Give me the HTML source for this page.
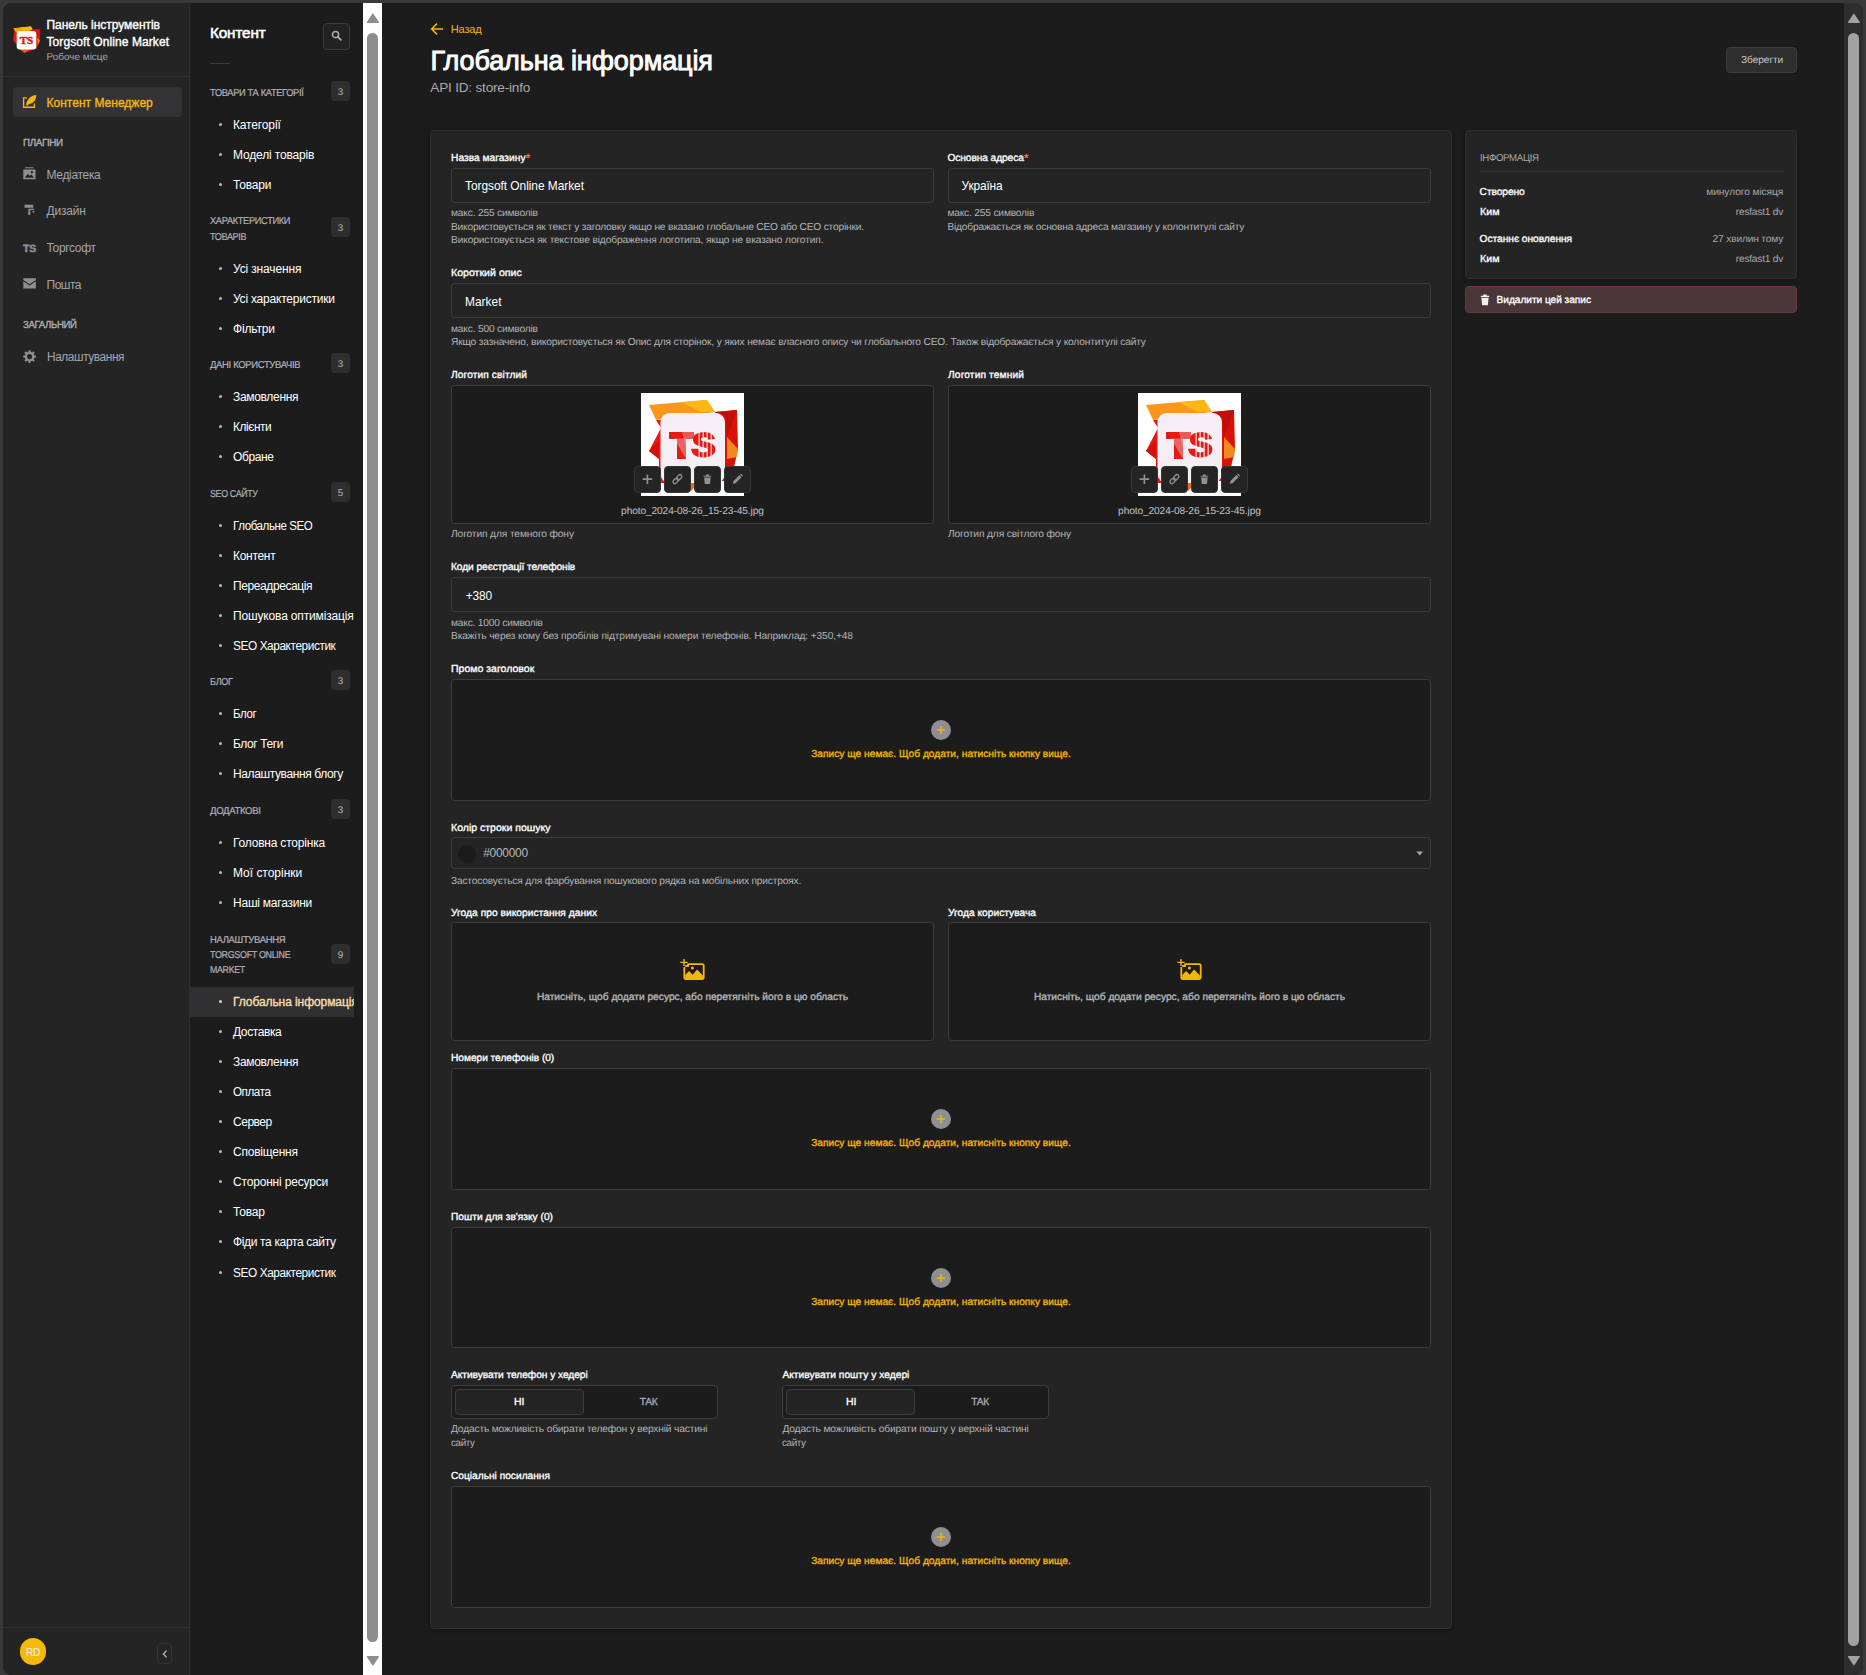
<!DOCTYPE html>
<html lang="uk"><head><meta charset="utf-8"><title>Глобальна інформація</title>
<style>
html,body{margin:0;padding:0;background:#38393b;}
body{width:1866px;height:1675px;overflow:hidden;position:relative;background:#38393b;font-family:"Liberation Sans", sans-serif;}
div,span,svg{position:absolute;display:block;}
span{white-space:nowrap;line-height:1;}
</style></head><body>
<div style="left:3px;top:3px;width:1860px;height:1672px;background:#1c1c1c;border-radius:9px 9px 9px 9px;overflow:hidden;"><div style="left:0;top:0;width:186px;height:1672px;background:#242424;border-right:1px solid #2f2f2f;"></div><div style="left:360px;top:0;width:19.2px;height:1672px;background:#fdfdfd;"></div><div style="left:1841px;top:0;width:19px;height:1672px;background:#2d2d2d;"></div></div>
<svg style="left:12px;top:24.6px;" width="30" height="30" viewBox="0 0 30 30"><polygon points="1.3,3.2 18.8,1.6 20.6,4.2 27.8,4.5 28,15.6 24.6,23.4 12.4,28 1,15.6 2.5,6" fill="#e51b0b"/><polygon points="1.3,3.2 18.8,1.6 20.6,4.2 14,7.5 4,7.5" fill="#f9a60c"/><polygon points="8,2.6 18.8,1.6 20.6,4.2 12,5" fill="#fcc10f"/><polygon points="20.6,4.4 27.8,4.5 28,15.6 24.6,21" fill="#d8140a"/><polygon points="24.6,12 28,15.6 26,20" fill="#f07a14"/><polygon points="6,23 12.4,28 18,24" fill="#f2551a"/><rect x="4.7" y="6" width="19.6" height="18.6" rx="3" fill="#fff"/><text x="14.5" y="19.2" font-family="Liberation Serif, serif" font-weight="700" font-size="11" text-anchor="middle" fill="#e3160f" stroke="#e3160f" stroke-width="0.5">TS</text></svg>
<span style="left:46.50px;top:19px;font-size:12px;color:#ffffff;letter-spacing:-0.032px;-webkit-text-stroke:0.38px #ffffff;">Панель інструментів</span>
<span style="left:46.50px;top:36px;font-size:12px;color:#ffffff;letter-spacing:0.085px;-webkit-text-stroke:0.38px #ffffff;">Torgsoft Online Market</span>
<span style="left:46.50px;top:53px;font-size:10px;color:#a5a5ad;letter-spacing:-0.017px;text-rendering:geometricPrecision;">Робоче місце</span>
<div style="left:3px;top:75.5px;width:186px;height:1px;background:#303030;"></div>
<div style="left:13px;top:87px;width:169px;height:30px;background:#333336;border-radius:4px;"></div>
<svg style="left:22px;top:94px;" width="15" height="15" viewBox="0 0 15 15"><path d="M4.9 3.9H1.6v9.3h10.8V9.4" stroke="#f5b50a" stroke-width="1.35" fill="none"/><path d="M4.2 11.6 C4.3 6.4 8.2 1.5 14.2 1.1 C14.3 6.2 11.2 9.8 6.9 10 L5.4 11.7Z" fill="#f5b50a"/></svg>
<span style="left:46.50px;top:97px;font-size:12px;color:#f5b50a;letter-spacing:0.019px;-webkit-text-stroke:0.38px #f5b50a;">Контент Менеджер</span>
<span style="left:23.20px;top:139px;font-size:10.2px;color:#b0b0b6;letter-spacing:-0.357px;transform-origin:0 0;transform:scaleX(0.9592);-webkit-text-stroke:0.33px #b0b0b6;text-rendering:geometricPrecision;">ПЛАГІНИ</span>
<svg style="left:23.3px;top:167.2px;" width="12.8" height="12.8" viewBox="0 0 14 14"><rect x="2.4" y="0.3" width="9.2" height="1.1" fill="#8e8e93"/><path d="M0.3 2.6h13.4v10.9H0.3z M9.7 4.4a1.3 1.3 0 1 0 0.01 0z M1.9 11.7h10.2l-3.1-3.4-1.6 1.6-2-2.4z" fill="#8e8e93" fill-rule="evenodd"/></svg>
<span style="left:46.50px;top:169px;font-size:12px;color:#a5a5ad;letter-spacing:-0.318px;">Медіатека</span>
<svg style="left:24.2px;top:204.4px;" width="11.6" height="11.6" viewBox="0 0 13 13"><rect x="0.6" y="0.8" width="9.8" height="3.4" fill="#8e8e93"/><path d="M0.6 5.2h10.9v1.4H6.8v1.9H4.9V5.2z" fill="#8e8e93"/><rect x="4.6" y="8.4" width="2.6" height="3.6" rx="0.6" fill="#8e8e93"/><circle cx="10.6" cy="8.7" r="1.1" fill="#8e8e93"/></svg>
<span style="left:46.50px;top:205px;font-size:12px;color:#a5a5ad;letter-spacing:-0.169px;">Дизайн</span>
<span style="left:23.00px;top:244px;font-size:10.5px;color:#8e8e93;letter-spacing:-0.222px;font-weight:700;-webkit-text-stroke:0.5px #8e8e93;text-rendering:geometricPrecision;">TS</span>
<span style="left:46.50px;top:242px;font-size:12px;color:#a5a5ad;letter-spacing:-0.326px;">Торгсофт</span>
<svg style="left:23px;top:278.3px;" width="13.2" height="10.8" viewBox="0 0 14 12"><path d="M0 0.2h14v1.9L7 6.9 0 2.1z M0 3.6l7 4.8 7-4.8V11.8H0z" fill="#8e8e93"/></svg>
<span style="left:46.50px;top:279px;font-size:12px;color:#a5a5ad;letter-spacing:-0.492px;">Пошта</span>
<span style="left:23.20px;top:321px;font-size:10.2px;color:#b0b0b6;letter-spacing:-0.357px;transform-origin:0 0;transform:scaleX(0.9419);-webkit-text-stroke:0.33px #b0b0b6;text-rendering:geometricPrecision;">ЗАГАЛЬНИЙ</span>
<svg style="left:23px;top:349.9px;" width="13.2" height="13.2" viewBox="0 0 14 14"><path d="M12.06,5.79 L13.82,5.92 L13.82,8.08 L12.06,8.21 L11.43,9.72 L12.58,11.06 L11.06,12.58 L9.72,11.43 L8.21,12.06 L8.08,13.82 L5.92,13.82 L5.79,12.06 L4.28,11.43 L2.94,12.58 L1.42,11.06 L2.57,9.72 L1.94,8.21 L0.18,8.08 L0.18,5.92 L1.94,5.79 L2.57,4.28 L1.42,2.94 L2.94,1.42 L4.28,2.57 L5.79,1.94 L5.92,0.18 L8.08,0.18 L8.21,1.94 L9.72,2.57 L11.06,1.42 L12.58,2.94 L11.43,4.28Z M9.7,7 a2.7,2.7 0 1,0 -5.4,0 a2.7,2.7 0 1,0 5.4,0Z" fill="#8e8e93" fill-rule="evenodd"/></svg>
<span style="left:46.50px;top:351px;font-size:12px;color:#a5a5ad;letter-spacing:-0.420px;transform-origin:0 0;transform:scaleX(0.9894);">Налаштування</span>
<div style="left:3px;top:1627px;width:186px;height:1px;background:#303030;"></div>
<div style="left:19.8px;top:1638px;width:26.2px;height:26.8px;border-radius:13.4px;background:#f5b90c;"></div>
<span style="left:25.85px;top:1647px;font-size:11px;color:#eef0ee;letter-spacing:-0.385px;transform-origin:0 0;transform:scaleX(0.9222);">RD</span>
<div style="left:157.4px;top:1643.4px;width:14.4px;height:20.4px;border:1px solid #323232;box-sizing:border-box;border-radius:4px;"></div>
<svg style="left:159.6px;top:1647.7px;" width="10" height="12" viewBox="0 0 10 12"><path d="M6.6 2.6L3.4 6l3.2 3.4" stroke="#b8b8bc" stroke-width="1.3" fill="none"/></svg>
<span style="left:210.00px;top:25px;font-size:15.3px;color:#ffffff;letter-spacing:-0.154px;-webkit-text-stroke:0.55px #fff;">Контент</span>
<div style="left:323px;top:23px;width:27px;height:27px;background:#222222;border:1px solid #3b3b3b;box-sizing:border-box;border-radius:4px;"></div>
<svg style="left:330.6px;top:30.4px;" width="11.4" height="11.4" viewBox="0 0 13 13"><circle cx="5.2" cy="5.2" r="3.5" stroke="#a9a9ad" stroke-width="1.8" fill="none"/><path d="M8 8l3.2 3.2" stroke="#a9a9ad" stroke-width="2.1" stroke-linecap="round"/></svg>
<div style="left:210px;top:63px;width:20px;height:1px;background:#3a3a3a;"></div>
<span style="left:210.00px;top:89px;font-size:10.0px;color:#b2b2ba;letter-spacing:-0.350px;transform-origin:0 0;transform:scaleX(0.9250);-webkit-text-stroke:0.2px #b2b2ba;text-rendering:geometricPrecision;">ТОВАРИ ТА КАТЕГОРІЇ</span>
<div style="left:331px;top:81.2px;width:19px;height:19.7px;background:#2e2e2e;border-radius:4px;"></div>
<span style="left:337.87px;top:88px;font-size:9.8px;color:#b8b8bc;letter-spacing:-0.294px;text-rendering:geometricPrecision;">3</span>
<div style="left:218.9px;top:123px;width:3px;height:3px;border-radius:1.5px;background:#b9b9b9;"></div>
<span style="left:233.00px;top:119px;font-size:12px;color:#ffffff;letter-spacing:-0.145px;">Категорії</span>
<div style="left:218.9px;top:153px;width:3px;height:3px;border-radius:1.5px;background:#b9b9b9;"></div>
<span style="left:233.00px;top:149px;font-size:12px;color:#ffffff;letter-spacing:-0.153px;">Моделі товарів</span>
<div style="left:218.9px;top:183px;width:3px;height:3px;border-radius:1.5px;background:#b9b9b9;"></div>
<span style="left:233.00px;top:179px;font-size:12px;color:#ffffff;letter-spacing:-0.172px;">Товари</span>
<span style="left:210.00px;top:217px;font-size:10.0px;color:#b2b2ba;letter-spacing:-0.350px;transform-origin:0 0;transform:scaleX(0.9240);-webkit-text-stroke:0.2px #b2b2ba;text-rendering:geometricPrecision;">ХАРАКТЕРИСТИКИ</span>
<span style="left:210.00px;top:233px;font-size:10.0px;color:#b2b2ba;letter-spacing:-0.350px;transform-origin:0 0;transform:scaleX(0.9017);-webkit-text-stroke:0.2px #b2b2ba;text-rendering:geometricPrecision;">ТОВАРІВ</span>
<div style="left:331px;top:217.2px;width:19px;height:19.7px;background:#2e2e2e;border-radius:4px;"></div>
<span style="left:337.87px;top:224px;font-size:9.8px;color:#b8b8bc;letter-spacing:-0.294px;text-rendering:geometricPrecision;">3</span>
<div style="left:218.9px;top:267px;width:3px;height:3px;border-radius:1.5px;background:#b9b9b9;"></div>
<span style="left:233.00px;top:263px;font-size:12px;color:#ffffff;letter-spacing:-0.141px;">Усі значення</span>
<div style="left:218.9px;top:297px;width:3px;height:3px;border-radius:1.5px;background:#b9b9b9;"></div>
<span style="left:233.00px;top:293px;font-size:12px;color:#ffffff;letter-spacing:-0.215px;">Усі характеристики</span>
<div style="left:218.9px;top:327px;width:3px;height:3px;border-radius:1.5px;background:#b9b9b9;"></div>
<span style="left:233.00px;top:323px;font-size:12px;color:#ffffff;letter-spacing:-0.164px;">Фільтри</span>
<span style="left:210.00px;top:361px;font-size:10.0px;color:#b2b2ba;letter-spacing:-0.350px;transform-origin:0 0;transform:scaleX(0.9460);-webkit-text-stroke:0.2px #b2b2ba;text-rendering:geometricPrecision;">ДАНІ КОРИСТУВАЧІВ</span>
<div style="left:331px;top:353.2px;width:19px;height:19.7px;background:#2e2e2e;border-radius:4px;"></div>
<span style="left:337.87px;top:360px;font-size:9.8px;color:#b8b8bc;letter-spacing:-0.294px;text-rendering:geometricPrecision;">3</span>
<div style="left:218.9px;top:395px;width:3px;height:3px;border-radius:1.5px;background:#b9b9b9;"></div>
<span style="left:233.00px;top:391px;font-size:12px;color:#ffffff;letter-spacing:-0.319px;">Замовлення</span>
<div style="left:218.9px;top:425px;width:3px;height:3px;border-radius:1.5px;background:#b9b9b9;"></div>
<span style="left:233.00px;top:421px;font-size:12px;color:#ffffff;letter-spacing:-0.420px;transform-origin:0 0;transform:scaleX(0.9900);">Клієнти</span>
<div style="left:218.9px;top:455px;width:3px;height:3px;border-radius:1.5px;background:#b9b9b9;"></div>
<span style="left:233.00px;top:451px;font-size:12px;color:#ffffff;letter-spacing:-0.392px;">Обране</span>
<span style="left:210.00px;top:490px;font-size:10.0px;color:#b2b2ba;letter-spacing:-0.350px;transform-origin:0 0;transform:scaleX(0.8802);-webkit-text-stroke:0.2px #b2b2ba;text-rendering:geometricPrecision;">SEO САЙТУ</span>
<div style="left:331px;top:482.2px;width:19px;height:19.7px;background:#2e2e2e;border-radius:4px;"></div>
<span style="left:337.87px;top:489px;font-size:9.8px;color:#b8b8bc;letter-spacing:-0.294px;text-rendering:geometricPrecision;">5</span>
<div style="left:218.9px;top:524px;width:3px;height:3px;border-radius:1.5px;background:#b9b9b9;"></div>
<span style="left:233.00px;top:520px;font-size:12px;color:#ffffff;letter-spacing:-0.420px;transform-origin:0 0;transform:scaleX(0.9603);">Глобальне SEO</span>
<div style="left:218.9px;top:554px;width:3px;height:3px;border-radius:1.5px;background:#b9b9b9;"></div>
<span style="left:233.00px;top:550px;font-size:12px;color:#ffffff;letter-spacing:-0.292px;">Контент</span>
<div style="left:218.9px;top:584px;width:3px;height:3px;border-radius:1.5px;background:#b9b9b9;"></div>
<span style="left:233.00px;top:580px;font-size:12px;color:#ffffff;letter-spacing:-0.399px;">Переадресація</span>
<div style="left:218.9px;top:614px;width:3px;height:3px;border-radius:1.5px;background:#b9b9b9;"></div>
<span style="left:233.00px;top:610px;font-size:12px;color:#ffffff;letter-spacing:-0.154px;">Пошукова оптимізація</span>
<div style="left:218.9px;top:644px;width:3px;height:3px;border-radius:1.5px;background:#b9b9b9;"></div>
<span style="left:233.00px;top:640px;font-size:12px;color:#ffffff;letter-spacing:-0.420px;transform-origin:0 0;transform:scaleX(0.9863);">SEO Характеристик</span>
<span style="left:210.00px;top:678px;font-size:10.0px;color:#b2b2ba;letter-spacing:-0.350px;transform-origin:0 0;transform:scaleX(0.9059);-webkit-text-stroke:0.2px #b2b2ba;text-rendering:geometricPrecision;">БЛОГ</span>
<div style="left:331px;top:670.2px;width:19px;height:19.7px;background:#2e2e2e;border-radius:4px;"></div>
<span style="left:337.87px;top:677px;font-size:9.8px;color:#b8b8bc;letter-spacing:-0.294px;text-rendering:geometricPrecision;">3</span>
<div style="left:218.9px;top:712px;width:3px;height:3px;border-radius:1.5px;background:#b9b9b9;"></div>
<span style="left:233.00px;top:708px;font-size:12px;color:#ffffff;letter-spacing:-0.420px;transform-origin:0 0;transform:scaleX(0.9604);">Блог</span>
<div style="left:218.9px;top:742px;width:3px;height:3px;border-radius:1.5px;background:#b9b9b9;"></div>
<span style="left:233.00px;top:738px;font-size:12px;color:#ffffff;letter-spacing:-0.409px;">Блог Теги</span>
<div style="left:218.9px;top:772px;width:3px;height:3px;border-radius:1.5px;background:#b9b9b9;"></div>
<span style="left:233.00px;top:768px;font-size:12px;color:#ffffff;letter-spacing:-0.382px;">Налаштування блогу</span>
<span style="left:210.00px;top:807px;font-size:10.0px;color:#b2b2ba;letter-spacing:-0.350px;transform-origin:0 0;transform:scaleX(0.9559);-webkit-text-stroke:0.2px #b2b2ba;text-rendering:geometricPrecision;">ДОДАТКОВІ</span>
<div style="left:331px;top:799.2px;width:19px;height:19.7px;background:#2e2e2e;border-radius:4px;"></div>
<span style="left:337.87px;top:806px;font-size:9.8px;color:#b8b8bc;letter-spacing:-0.294px;text-rendering:geometricPrecision;">3</span>
<div style="left:218.9px;top:841px;width:3px;height:3px;border-radius:1.5px;background:#b9b9b9;"></div>
<span style="left:233.00px;top:837px;font-size:12px;color:#ffffff;letter-spacing:-0.195px;">Головна сторінка</span>
<div style="left:218.9px;top:871px;width:3px;height:3px;border-radius:1.5px;background:#b9b9b9;"></div>
<span style="left:233.00px;top:867px;font-size:12px;color:#ffffff;letter-spacing:-0.022px;">Мої сторінки</span>
<div style="left:218.9px;top:901px;width:3px;height:3px;border-radius:1.5px;background:#b9b9b9;"></div>
<span style="left:233.00px;top:897px;font-size:12px;color:#ffffff;letter-spacing:-0.232px;">Наші магазини</span>
<span style="left:210.00px;top:936px;font-size:10.0px;color:#b2b2ba;letter-spacing:-0.350px;transform-origin:0 0;transform:scaleX(0.9460);-webkit-text-stroke:0.2px #b2b2ba;text-rendering:geometricPrecision;">НАЛАШТУВАННЯ</span>
<span style="left:210.00px;top:951px;font-size:10.0px;color:#b2b2ba;letter-spacing:-0.350px;transform-origin:0 0;transform:scaleX(0.8925);-webkit-text-stroke:0.2px #b2b2ba;text-rendering:geometricPrecision;">TORGSOFT ONLINE</span>
<span style="left:210.00px;top:966px;font-size:10.0px;color:#b2b2ba;letter-spacing:-0.350px;transform-origin:0 0;transform:scaleX(0.8817);-webkit-text-stroke:0.2px #b2b2ba;text-rendering:geometricPrecision;">MARKET</span>
<div style="left:331px;top:944.2px;width:19px;height:19.7px;background:#2e2e2e;border-radius:4px;"></div>
<span style="left:337.87px;top:951px;font-size:9.8px;color:#b8b8bc;letter-spacing:-0.294px;text-rendering:geometricPrecision;">9</span>
<div style="left:190px;top:987px;width:164px;height:30px;background:#303033;"></div>
<div style="left:218.9px;top:1000px;width:3px;height:3px;border-radius:1.5px;background:#e8d4b0;"></div>
<div style="left:233px;top:992px;width:121px;height:20px;overflow:hidden;">
<span style="left:0.00px;top:4px;font-size:12px;color:#f6dcae;letter-spacing:-0.078px;-webkit-text-stroke:0.38px #f6dcae;">Глобальна інформація</span>
</div>
<div style="left:218.9px;top:1030px;width:3px;height:3px;border-radius:1.5px;background:#b9b9b9;"></div>
<span style="left:233.00px;top:1026px;font-size:12px;color:#ffffff;letter-spacing:-0.392px;">Доставка</span>
<div style="left:218.9px;top:1060px;width:3px;height:3px;border-radius:1.5px;background:#b9b9b9;"></div>
<span style="left:233.00px;top:1056px;font-size:12px;color:#ffffff;letter-spacing:-0.319px;">Замовлення</span>
<div style="left:218.9px;top:1090px;width:3px;height:3px;border-radius:1.5px;background:#b9b9b9;"></div>
<span style="left:233.00px;top:1086px;font-size:12px;color:#ffffff;letter-spacing:-0.420px;transform-origin:0 0;transform:scaleX(0.9673);">Оплата</span>
<div style="left:218.9px;top:1120px;width:3px;height:3px;border-radius:1.5px;background:#b9b9b9;"></div>
<span style="left:233.00px;top:1116px;font-size:12px;color:#ffffff;letter-spacing:-0.482px;">Сервер</span>
<div style="left:218.9px;top:1150px;width:3px;height:3px;border-radius:1.5px;background:#b9b9b9;"></div>
<span style="left:233.00px;top:1146px;font-size:12px;color:#ffffff;letter-spacing:-0.227px;">Сповіщення</span>
<div style="left:218.9px;top:1180px;width:3px;height:3px;border-radius:1.5px;background:#b9b9b9;"></div>
<span style="left:233.00px;top:1176px;font-size:12px;color:#ffffff;letter-spacing:-0.180px;">Сторонні ресурси</span>
<div style="left:218.9px;top:1210px;width:3px;height:3px;border-radius:1.5px;background:#b9b9b9;"></div>
<span style="left:233.00px;top:1206px;font-size:12px;color:#ffffff;letter-spacing:-0.164px;">Товар</span>
<div style="left:218.9px;top:1240px;width:3px;height:3px;border-radius:1.5px;background:#b9b9b9;"></div>
<span style="left:233.00px;top:1236px;font-size:12px;color:#ffffff;letter-spacing:-0.348px;">Фіди та карта сайту</span>
<div style="left:218.9px;top:1271px;width:3px;height:3px;border-radius:1.5px;background:#b9b9b9;"></div>
<span style="left:233.00px;top:1267px;font-size:12px;color:#ffffff;letter-spacing:-0.420px;transform-origin:0 0;transform:scaleX(0.9872);">SEO Характеристик</span>
<svg style="left:365.6px;top:12px;" width="14" height="12" viewBox="0 0 14 12"><path d="M6.9 0.9 L12.9 9.9 Q13.2 10.9 12.3 10.9 L1.5 10.9 Q0.6 10.9 0.9 9.9 Z" fill="#8c8c8c"/></svg>
<div style="left:367px;top:32.5px;width:11px;height:1609.5px;background:#8c8c8c;border-radius:5.5px;"></div>
<svg style="left:365.6px;top:1655px;" width="14" height="12" viewBox="0 0 14 12"><path d="M6.9 11.1 L12.9 2.1 Q13.2 1.1 12.3 1.1 L1.5 1.1 Q0.6 1.1 0.9 2.1 Z" fill="#8c8c8c"/></svg>
<svg style="left:430px;top:22px;" width="14" height="14" viewBox="0 0 14 14"><path d="M13 7H2.2 M7 1.6L1.6 7 7 12.4" stroke="#f5b50a" stroke-width="1.5" fill="none" stroke-linejoin="miter"/></svg>
<span style="left:450.75px;top:24px;font-size:11px;color:#f5b50a;letter-spacing:-0.133px;">Назад</span>
<span style="left:430.50px;top:48px;font-size:27px;color:#ffffff;letter-spacing:-0.085px;-webkit-text-stroke:0.9px #fff;">Глобальна інформація</span>
<span style="left:430.30px;top:81px;font-size:13.6px;color:#a9a9ad;letter-spacing:-0.206px;">API ID: store-info</span>
<div style="left:1726px;top:47px;width:71px;height:26px;background:#2e2e2e;border:1px solid #3c3c3c;box-sizing:border-box;border-radius:4px;"></div>
<span style="left:1741.00px;top:56px;font-size:10.2px;color:#c8c8cc;letter-spacing:-0.093px;text-rendering:geometricPrecision;">Зберегти</span>
<div style="left:430px;top:130px;width:1022px;height:1499px;background:#242424;border:1px solid #2f2f2f;box-sizing:border-box;border-radius:3.5px;box-shadow:0 1px 5px rgba(0,0,0,0.4);"></div>
<span style="left:451.00px;top:154px;font-size:10.2px;color:#ffffff;letter-spacing:0.025px;-webkit-text-stroke:0.33px #ffffff;text-rendering:geometricPrecision;">Назва магазину</span>
<span style="left:525.70px;top:153px;font-size:11.5px;color:#ef6a5e;letter-spacing:0.000px;-webkit-text-stroke:0.37px #ef6a5e;">*</span>
<div style="left:451px;top:168px;width:483px;height:35px;background:#242424;border:1px solid #3d3d3d;box-sizing:border-box;border-radius:3.5px;"></div>
<span style="left:465.00px;top:181px;font-size:11.9px;color:#ffffff;letter-spacing:-0.030px;">Torgsoft Online Market</span>
<span style="left:451.00px;top:209px;font-size:10.2px;color:#b4b4b8;letter-spacing:-0.176px;text-rendering:geometricPrecision;">макс. 255 символів</span>
<span style="left:451.00px;top:223px;font-size:10.2px;color:#b4b4b8;letter-spacing:-0.200px;text-rendering:geometricPrecision;">Використовується як текст у заголовку якщо не вказано глобальне СЕО або СЕО сторінки.</span>
<span style="left:451.00px;top:236px;font-size:10.2px;color:#b4b4b8;letter-spacing:-0.123px;text-rendering:geometricPrecision;">Використовується як текстове відображення логотипа, якщо не вказано логотип.</span>
<span style="left:947.40px;top:154px;font-size:10.2px;color:#ffffff;letter-spacing:-0.081px;-webkit-text-stroke:0.33px #ffffff;text-rendering:geometricPrecision;">Основна адреса</span>
<span style="left:1024.10px;top:153px;font-size:11.5px;color:#ef6a5e;letter-spacing:0.000px;-webkit-text-stroke:0.37px #ef6a5e;">*</span>
<div style="left:948px;top:168px;width:483px;height:35px;background:#242424;border:1px solid #3d3d3d;box-sizing:border-box;border-radius:3.5px;"></div>
<span style="left:961.60px;top:181px;font-size:11.9px;color:#ffffff;letter-spacing:-0.156px;">Україна</span>
<span style="left:947.40px;top:209px;font-size:10.2px;color:#b4b4b8;letter-spacing:-0.176px;text-rendering:geometricPrecision;">макс. 255 символів</span>
<span style="left:947.40px;top:223px;font-size:10.2px;color:#b4b4b8;letter-spacing:-0.186px;text-rendering:geometricPrecision;">Відображається як основна адреса магазину у колонтитулі сайту</span>
<span style="left:451.00px;top:269px;font-size:10.2px;color:#ffffff;letter-spacing:0.000px;transform-origin:0 0;transform:scaleX(1.0402);-webkit-text-stroke:0.33px #ffffff;text-rendering:geometricPrecision;">Короткий опис</span>
<div style="left:451px;top:283px;width:980px;height:35px;background:#242424;border:1px solid #3d3d3d;box-sizing:border-box;border-radius:3.5px;"></div>
<span style="left:465.00px;top:297px;font-size:11.9px;color:#ffffff;letter-spacing:0.031px;">Market</span>
<span style="left:451.00px;top:325px;font-size:10.2px;color:#b4b4b8;letter-spacing:-0.176px;text-rendering:geometricPrecision;">макс. 500 символів</span>
<span style="left:451.00px;top:338px;font-size:10.2px;color:#b4b4b8;letter-spacing:-0.153px;text-rendering:geometricPrecision;">Якщо зазначено, використовується як Опис для сторінок, у яких немає власного опису чи глобального СЕО. Також відображається у колонтитулі сайту</span>
<span style="left:451.00px;top:371px;font-size:10.2px;color:#ffffff;letter-spacing:0.105px;-webkit-text-stroke:0.33px #ffffff;text-rendering:geometricPrecision;">Логотип світлий</span>
<div style="left:451px;top:385px;width:483px;height:138.5px;background:#1c1c1c;border:1px solid #3d3d3d;box-sizing:border-box;border-radius:3.5px;"></div>
<svg style="left:641.0px;top:393px;" width="103" height="103" viewBox="0 0 103 103"><rect width="103" height="103" fill="#fff"/><polygon points="8,12 66,7 74,19 15,27" fill="#f7981d"/><polygon points="40,9 66,7 74,19 60,19" fill="#fcb813"/><polygon points="15,27 20,35 8,58 18,66 18,90 30,90 30,27" fill="#ea180c"/><polygon points="8,58 18,66 18,48" fill="#d2120a"/><polygon points="74,19 96,17 97,56 90,88 78,88 78,27" fill="#d91208"/><polygon points="86,44 97,56 96,64 86,66" fill="#f08a1c"/><polygon points="74,19 96,17 86,44 84,28" fill="#c20e08"/><polygon points="46,88 60,88 50,98" fill="#f26a1b"/><rect x="19.5" y="20" width="64.5" height="70" rx="9" fill="#f4eff5"/><g transform="translate(0 39) scale(1 0.82) translate(0 -39)"><path d="M28 39h25v8.6h-8v24.4h-9V47.6h-8z" fill="#e41b13"/><path d="M41 39h12v8.6h-8v10z" fill="#f4eff5" opacity="0.3"/><path d="M74 47.5c-1-5-5-8.5-11-8.5-6.5 0-11 3.6-11 9 0 5 3 7.4 9.5 9.3 4 1.2 5 1.9 5 3.6 0 1.8-1.6 2.9-4 2.9-3 0-4.8-1.4-5.2-4.4h-7.2c0.5 7 5 10.6 12.4 10.6 7.2 0 11.9-3.7 11.9-9.6 0-4.9-2.8-7.5-9.6-9.4-4-1.1-4.9-1.7-4.9-3.2 0-1.5 1.3-2.5 3.4-2.5 2.4 0 3.7 1.1 4 3.3z" fill="#e41b13"/><path d="M33 47l12 0 0 25z" fill="#f4eff5" opacity="0.35"/><rect x="57.5" y="38" width="1.3" height="36" fill="#f4eff5" opacity="0.85"/><rect x="61.5" y="38" width="1.3" height="36" fill="#f4eff5" opacity="0.85"/><rect x="65.5" y="38" width="1.3" height="36" fill="#f4eff5" opacity="0.85"/><rect x="69.5" y="38" width="1.3" height="36" fill="#f4eff5" opacity="0.85"/></g></svg>
<div style="left:634.0px;top:466px;width:27px;height:27px;background:#242424;border:1px solid #363636;box-sizing:border-box;border-radius:4px;"></div>
<svg style="left:634.0px;top:466px;" width="27" height="27" viewBox="0 0 27 27"><g transform="translate(13.4 13.2) scale(0.9) translate(-13.5 -13.5)"><path d="M13.5 8.2v10.6M8.2 13.5h10.6" stroke="#8f8f94" stroke-width="1.9"/></g></svg>
<div style="left:664.0px;top:466px;width:27px;height:27px;background:#242424;border:1px solid #363636;box-sizing:border-box;border-radius:4px;"></div>
<svg style="left:664.0px;top:466px;" width="27" height="27" viewBox="0 0 27 27"><g transform="translate(13.4 13.2) scale(0.9) translate(-13.5 -13.5)"><g transform="rotate(-45 13.5 13.5)" stroke="#8f8f94" stroke-width="1.5" fill="none"><rect x="7.3" y="11.4" width="6.8" height="4.2" rx="2.1"/><rect x="12.9" y="11.4" width="6.8" height="4.2" rx="2.1"/></g></g></svg>
<div style="left:694.0px;top:466px;width:27px;height:27px;background:#242424;border:1px solid #363636;box-sizing:border-box;border-radius:4px;"></div>
<svg style="left:694.0px;top:466px;" width="27" height="27" viewBox="0 0 27 27"><g transform="translate(13.4 13.2) scale(0.9) translate(-13.5 -13.5)"><path d="M9.3 9.6h8.4v1.3H9.3z M11.8 8.4h3.4v1.2h-3.4z M9.9 11.6h7.2l-0.7 7.3h-5.8z" fill="#8f8f94"/></g></svg>
<div style="left:724.0px;top:466px;width:27px;height:27px;background:#242424;border:1px solid #363636;box-sizing:border-box;border-radius:4px;"></div>
<svg style="left:724.0px;top:466px;" width="27" height="27" viewBox="0 0 27 27"><g transform="translate(13.4 13.2) scale(0.9) translate(-13.5 -13.5)"><path d="M8.4 18.6l0.7-3.1 6.6-6.6 2.4 2.4-6.6 6.6z M16.4 8.2l1-1 2.4 2.4-1 1z" fill="#8f8f94"/></g></svg>
<span style="left:621.12px;top:507px;font-size:10.2px;color:#c2c2c6;letter-spacing:-0.122px;text-rendering:geometricPrecision;">photo_2024-08-26_15-23-45.jpg</span>
<span style="left:451.00px;top:530px;font-size:10.2px;color:#b4b4b8;letter-spacing:-0.109px;text-rendering:geometricPrecision;">Логотип для темного фону</span>
<span style="left:948.00px;top:371px;font-size:10.2px;color:#ffffff;letter-spacing:0.137px;-webkit-text-stroke:0.33px #ffffff;text-rendering:geometricPrecision;">Логотип темний</span>
<div style="left:948px;top:385px;width:483px;height:138.5px;background:#1c1c1c;border:1px solid #3d3d3d;box-sizing:border-box;border-radius:3.5px;"></div>
<svg style="left:1138.0px;top:393px;" width="103" height="103" viewBox="0 0 103 103"><rect width="103" height="103" fill="#fff"/><polygon points="8,12 66,7 74,19 15,27" fill="#f7981d"/><polygon points="40,9 66,7 74,19 60,19" fill="#fcb813"/><polygon points="15,27 20,35 8,58 18,66 18,90 30,90 30,27" fill="#ea180c"/><polygon points="8,58 18,66 18,48" fill="#d2120a"/><polygon points="74,19 96,17 97,56 90,88 78,88 78,27" fill="#d91208"/><polygon points="86,44 97,56 96,64 86,66" fill="#f08a1c"/><polygon points="74,19 96,17 86,44 84,28" fill="#c20e08"/><polygon points="46,88 60,88 50,98" fill="#f26a1b"/><rect x="19.5" y="20" width="64.5" height="70" rx="9" fill="#f4eff5"/><g transform="translate(0 39) scale(1 0.82) translate(0 -39)"><path d="M28 39h25v8.6h-8v24.4h-9V47.6h-8z" fill="#e41b13"/><path d="M41 39h12v8.6h-8v10z" fill="#f4eff5" opacity="0.3"/><path d="M74 47.5c-1-5-5-8.5-11-8.5-6.5 0-11 3.6-11 9 0 5 3 7.4 9.5 9.3 4 1.2 5 1.9 5 3.6 0 1.8-1.6 2.9-4 2.9-3 0-4.8-1.4-5.2-4.4h-7.2c0.5 7 5 10.6 12.4 10.6 7.2 0 11.9-3.7 11.9-9.6 0-4.9-2.8-7.5-9.6-9.4-4-1.1-4.9-1.7-4.9-3.2 0-1.5 1.3-2.5 3.4-2.5 2.4 0 3.7 1.1 4 3.3z" fill="#e41b13"/><path d="M33 47l12 0 0 25z" fill="#f4eff5" opacity="0.35"/><rect x="57.5" y="38" width="1.3" height="36" fill="#f4eff5" opacity="0.85"/><rect x="61.5" y="38" width="1.3" height="36" fill="#f4eff5" opacity="0.85"/><rect x="65.5" y="38" width="1.3" height="36" fill="#f4eff5" opacity="0.85"/><rect x="69.5" y="38" width="1.3" height="36" fill="#f4eff5" opacity="0.85"/></g></svg>
<div style="left:1131.0px;top:466px;width:27px;height:27px;background:#242424;border:1px solid #363636;box-sizing:border-box;border-radius:4px;"></div>
<svg style="left:1131.0px;top:466px;" width="27" height="27" viewBox="0 0 27 27"><g transform="translate(13.4 13.2) scale(0.9) translate(-13.5 -13.5)"><path d="M13.5 8.2v10.6M8.2 13.5h10.6" stroke="#8f8f94" stroke-width="1.9"/></g></svg>
<div style="left:1161.0px;top:466px;width:27px;height:27px;background:#242424;border:1px solid #363636;box-sizing:border-box;border-radius:4px;"></div>
<svg style="left:1161.0px;top:466px;" width="27" height="27" viewBox="0 0 27 27"><g transform="translate(13.4 13.2) scale(0.9) translate(-13.5 -13.5)"><g transform="rotate(-45 13.5 13.5)" stroke="#8f8f94" stroke-width="1.5" fill="none"><rect x="7.3" y="11.4" width="6.8" height="4.2" rx="2.1"/><rect x="12.9" y="11.4" width="6.8" height="4.2" rx="2.1"/></g></g></svg>
<div style="left:1191.0px;top:466px;width:27px;height:27px;background:#242424;border:1px solid #363636;box-sizing:border-box;border-radius:4px;"></div>
<svg style="left:1191.0px;top:466px;" width="27" height="27" viewBox="0 0 27 27"><g transform="translate(13.4 13.2) scale(0.9) translate(-13.5 -13.5)"><path d="M9.3 9.6h8.4v1.3H9.3z M11.8 8.4h3.4v1.2h-3.4z M9.9 11.6h7.2l-0.7 7.3h-5.8z" fill="#8f8f94"/></g></svg>
<div style="left:1221.0px;top:466px;width:27px;height:27px;background:#242424;border:1px solid #363636;box-sizing:border-box;border-radius:4px;"></div>
<svg style="left:1221.0px;top:466px;" width="27" height="27" viewBox="0 0 27 27"><g transform="translate(13.4 13.2) scale(0.9) translate(-13.5 -13.5)"><path d="M8.4 18.6l0.7-3.1 6.6-6.6 2.4 2.4-6.6 6.6z M16.4 8.2l1-1 2.4 2.4-1 1z" fill="#8f8f94"/></g></svg>
<span style="left:1118.12px;top:507px;font-size:10.2px;color:#c2c2c6;letter-spacing:-0.122px;text-rendering:geometricPrecision;">photo_2024-08-26_15-23-45.jpg</span>
<span style="left:948.00px;top:530px;font-size:10.2px;color:#b4b4b8;letter-spacing:-0.122px;text-rendering:geometricPrecision;">Логотип для світлого фону</span>
<span style="left:451.00px;top:563px;font-size:10.2px;color:#ffffff;letter-spacing:-0.076px;-webkit-text-stroke:0.33px #ffffff;text-rendering:geometricPrecision;">Коди реєстрації телефонів</span>
<div style="left:451px;top:577px;width:980px;height:35px;background:#242424;border:1px solid #3d3d3d;box-sizing:border-box;border-radius:3.5px;"></div>
<span style="left:465.75px;top:591px;font-size:11.9px;color:#ffffff;letter-spacing:-0.099px;">+380</span>
<span style="left:451.00px;top:619px;font-size:10.2px;color:#b4b4b8;letter-spacing:-0.202px;text-rendering:geometricPrecision;">макс. 1000 символів</span>
<span style="left:451.00px;top:632px;font-size:10.2px;color:#b4b4b8;letter-spacing:-0.111px;text-rendering:geometricPrecision;">Вкажіть через кому без пробілів підтримувані номери телефонів. Наприклад: +350,+48</span>
<span style="left:451.00px;top:665px;font-size:10.2px;color:#ffffff;letter-spacing:0.000px;transform-origin:0 0;transform:scaleX(1.0332);-webkit-text-stroke:0.33px #ffffff;text-rendering:geometricPrecision;">Промо заголовок</span>
<div style="left:451px;top:679px;width:980px;height:122px;background:#1c1c1c;border:1px solid #3d3d3d;box-sizing:border-box;border-radius:3.5px;"></div>
<div style="left:931.0px;top:720px;width:20px;height:20px;border-radius:10px;background:#8e8e93;"></div>
<svg style="left:935.0px;top:724px;" width="12" height="12" viewBox="0 0 12 12"><path d="M6 1.9v8.2M1.9 6h8.2" stroke="#f5b50a" stroke-width="1.4"/></svg>
<span style="left:811.20px;top:750px;font-size:10.2px;color:#f5b50a;letter-spacing:0.009px;-webkit-text-stroke:0.33px #f5b50a;text-rendering:geometricPrecision;">Запису ще немає. Щоб додати, натисніть кнопку вище.</span>
<span style="left:451.00px;top:824px;font-size:10.2px;color:#ffffff;letter-spacing:0.000px;transform-origin:0 0;transform:scaleX(1.0336);-webkit-text-stroke:0.33px #ffffff;text-rendering:geometricPrecision;">Колір строки пошуку</span>
<div style="left:451px;top:837px;width:980px;height:32px;background:#242424;border:1px solid #3d3d3d;box-sizing:border-box;border-radius:3.5px;"></div>
<div style="left:457.5px;top:845px;width:18px;height:18px;border-radius:9px;background:#1b1b1b;"></div>
<span style="left:483.25px;top:848px;font-size:11.9px;color:#b9b9bd;letter-spacing:-0.258px;">#000000</span>
<svg style="left:1416.2px;top:850.8px;" width="7.4" height="4.8" viewBox="0 0 9 6"><path d="M0.3 0.6h8.4L4.5 5.6z" fill="#a4a4a8"/></svg>
<span style="left:451.00px;top:877px;font-size:10.2px;color:#b4b4b8;letter-spacing:-0.181px;text-rendering:geometricPrecision;">Застосовується для фарбування пошукового рядка на мобільних пристроях.</span>
<span style="left:451.00px;top:909px;font-size:10.2px;color:#ffffff;letter-spacing:0.048px;-webkit-text-stroke:0.33px #ffffff;text-rendering:geometricPrecision;">Угода про використання даних</span>
<div style="left:451px;top:922px;width:483px;height:119px;background:#1c1c1c;border:1px solid #3d3d3d;box-sizing:border-box;border-radius:3.5px;"></div>
<svg style="left:680.0px;top:959px;" width="26" height="23" viewBox="0 0 26 23"><path d="M3.3 -0.2v2.9H0.4v1.4h2.9v2.9h1.4V4.1h2.9V2.7H4.7V-0.2z" fill="#f5b50a"/><path d="M5.2 8V5.9h2V4.2h15.2c1.2 0 2.2 1 2.2 2.2v12.3c0 1.2-1 2.2-2.2 2.2H5.6c-1.2 0-2.2-1-2.2-2.2V8z M5.2 8v10.6c0 0.3 0.2 0.5 0.5 0.5H22.300000000000001c0.3 0 0.5-0.2 0.5-0.5V6.5c0-0.3-0.2-0.5-0.5-0.5H8.9V8z" fill="#f5b50a" fill-rule="evenodd"/><path d="M5.2 19.2V16l3.9-3.9 3.6 3.6 4.4-5.3 5.8 6.2v2.6z" fill="#f5b50a"/><circle cx="12.4" cy="9" r="1.5" fill="#f5b50a"/></svg>
<span style="left:536.88px;top:993px;font-size:10.2px;color:#b4b4b8;letter-spacing:0.011px;-webkit-text-stroke:0.35px #b4b4b8;text-rendering:geometricPrecision;">Натисніть, щоб додати ресурс, або перетягніть його в цю область</span>
<span style="left:948.00px;top:909px;font-size:10.2px;color:#ffffff;letter-spacing:0.021px;-webkit-text-stroke:0.33px #ffffff;text-rendering:geometricPrecision;">Угода користувача</span>
<div style="left:948px;top:922px;width:483px;height:119px;background:#1c1c1c;border:1px solid #3d3d3d;box-sizing:border-box;border-radius:3.5px;"></div>
<svg style="left:1177.0px;top:959px;" width="26" height="23" viewBox="0 0 26 23"><path d="M3.3 -0.2v2.9H0.4v1.4h2.9v2.9h1.4V4.1h2.9V2.7H4.7V-0.2z" fill="#f5b50a"/><path d="M5.2 8V5.9h2V4.2h15.2c1.2 0 2.2 1 2.2 2.2v12.3c0 1.2-1 2.2-2.2 2.2H5.6c-1.2 0-2.2-1-2.2-2.2V8z M5.2 8v10.6c0 0.3 0.2 0.5 0.5 0.5H22.300000000000001c0.3 0 0.5-0.2 0.5-0.5V6.5c0-0.3-0.2-0.5-0.5-0.5H8.9V8z" fill="#f5b50a" fill-rule="evenodd"/><path d="M5.2 19.2V16l3.9-3.9 3.6 3.6 4.4-5.3 5.8 6.2v2.6z" fill="#f5b50a"/><circle cx="12.4" cy="9" r="1.5" fill="#f5b50a"/></svg>
<span style="left:1033.88px;top:993px;font-size:10.2px;color:#b4b4b8;letter-spacing:0.011px;-webkit-text-stroke:0.35px #b4b4b8;text-rendering:geometricPrecision;">Натисніть, щоб додати ресурс, або перетягніть його в цю область</span>
<span style="left:451.00px;top:1054px;font-size:10.2px;color:#ffffff;letter-spacing:-0.039px;-webkit-text-stroke:0.33px #ffffff;text-rendering:geometricPrecision;">Номери телефонів (0)</span>
<div style="left:451px;top:1068px;width:980px;height:122px;background:#1c1c1c;border:1px solid #3d3d3d;box-sizing:border-box;border-radius:3.5px;"></div>
<div style="left:931.0px;top:1109px;width:20px;height:20px;border-radius:10px;background:#8e8e93;"></div>
<svg style="left:935.0px;top:1113px;" width="12" height="12" viewBox="0 0 12 12"><path d="M6 1.9v8.2M1.9 6h8.2" stroke="#f5b50a" stroke-width="1.4"/></svg>
<span style="left:811.20px;top:1139px;font-size:10.2px;color:#f5b50a;letter-spacing:0.009px;-webkit-text-stroke:0.33px #f5b50a;text-rendering:geometricPrecision;">Запису ще немає. Щоб додати, натисніть кнопку вище.</span>
<span style="left:451.00px;top:1213px;font-size:10.2px;color:#ffffff;letter-spacing:0.013px;-webkit-text-stroke:0.33px #ffffff;text-rendering:geometricPrecision;">Пошти для зв&#x27;язку (0)</span>
<div style="left:451px;top:1227px;width:980px;height:121px;background:#1c1c1c;border:1px solid #3d3d3d;box-sizing:border-box;border-radius:3.5px;"></div>
<div style="left:931.0px;top:1268px;width:20px;height:20px;border-radius:10px;background:#8e8e93;"></div>
<svg style="left:935.0px;top:1272px;" width="12" height="12" viewBox="0 0 12 12"><path d="M6 1.9v8.2M1.9 6h8.2" stroke="#f5b50a" stroke-width="1.4"/></svg>
<span style="left:811.20px;top:1298px;font-size:10.2px;color:#f5b50a;letter-spacing:0.009px;-webkit-text-stroke:0.33px #f5b50a;text-rendering:geometricPrecision;">Запису ще немає. Щоб додати, натисніть кнопку вище.</span>
<span style="left:451.00px;top:1371px;font-size:10.2px;color:#ffffff;letter-spacing:-0.041px;-webkit-text-stroke:0.33px #ffffff;text-rendering:geometricPrecision;">Активувати телефон у хедері</span>
<div style="left:451px;top:1385px;width:266.6px;height:34px;background:#1c1c1c;border:1px solid #3d3d3d;box-sizing:border-box;border-radius:4px;"></div>
<div style="left:455px;top:1389px;width:129px;height:26px;background:#242424;border:1px solid #3d3d3d;box-sizing:border-box;border-radius:4px;"></div>
<span style="left:514.25px;top:1398px;font-size:10.2px;color:#ffffff;letter-spacing:0.000px;transform-origin:0 0;transform:scaleX(1.0307);-webkit-text-stroke:0.33px #ffffff;text-rendering:geometricPrecision;">НІ</span>
<span style="left:639.75px;top:1398px;font-size:10.2px;color:#a9a9ad;letter-spacing:-0.312px;-webkit-text-stroke:0.33px #a9a9ad;text-rendering:geometricPrecision;">ТАК</span>
<span style="left:451.00px;top:1425px;font-size:10.2px;color:#b4b4b8;letter-spacing:-0.153px;text-rendering:geometricPrecision;">Додасть можливість обирати телефон у верхній частині</span>
<span style="left:451.00px;top:1439px;font-size:10.2px;color:#b4b4b8;letter-spacing:-0.357px;transform-origin:0 0;transform:scaleX(0.9639);text-rendering:geometricPrecision;">сайту</span>
<span style="left:782.40px;top:1371px;font-size:10.2px;color:#ffffff;letter-spacing:0.046px;-webkit-text-stroke:0.33px #ffffff;text-rendering:geometricPrecision;">Активувати пошту у хедері</span>
<div style="left:782.4px;top:1385px;width:266.6px;height:34px;background:#1c1c1c;border:1px solid #3d3d3d;box-sizing:border-box;border-radius:4px;"></div>
<div style="left:786.4px;top:1389px;width:129px;height:26px;background:#242424;border:1px solid #3d3d3d;box-sizing:border-box;border-radius:4px;"></div>
<span style="left:845.65px;top:1398px;font-size:10.2px;color:#ffffff;letter-spacing:0.000px;transform-origin:0 0;transform:scaleX(1.0307);-webkit-text-stroke:0.33px #ffffff;text-rendering:geometricPrecision;">НІ</span>
<span style="left:971.15px;top:1398px;font-size:10.2px;color:#a9a9ad;letter-spacing:-0.312px;-webkit-text-stroke:0.33px #a9a9ad;text-rendering:geometricPrecision;">ТАК</span>
<span style="left:782.40px;top:1425px;font-size:10.2px;color:#b4b4b8;letter-spacing:-0.120px;text-rendering:geometricPrecision;">Додасть можливість обирати пошту у верхній частині</span>
<span style="left:782.40px;top:1439px;font-size:10.2px;color:#b4b4b8;letter-spacing:-0.357px;transform-origin:0 0;transform:scaleX(0.9639);text-rendering:geometricPrecision;">сайту</span>
<span style="left:451.00px;top:1472px;font-size:10.2px;color:#ffffff;letter-spacing:-0.006px;-webkit-text-stroke:0.33px #ffffff;text-rendering:geometricPrecision;">Соціальні посилання</span>
<div style="left:451px;top:1486px;width:980px;height:122px;background:#1c1c1c;border:1px solid #3d3d3d;box-sizing:border-box;border-radius:3.5px;"></div>
<div style="left:931.0px;top:1527px;width:20px;height:20px;border-radius:10px;background:#8e8e93;"></div>
<svg style="left:935.0px;top:1531px;" width="12" height="12" viewBox="0 0 12 12"><path d="M6 1.9v8.2M1.9 6h8.2" stroke="#f5b50a" stroke-width="1.4"/></svg>
<span style="left:811.20px;top:1557px;font-size:10.2px;color:#f5b50a;letter-spacing:0.009px;-webkit-text-stroke:0.33px #f5b50a;text-rendering:geometricPrecision;">Запису ще немає. Щоб додати, натисніть кнопку вище.</span>
<div style="left:1465px;top:130px;width:332px;height:149px;background:#242424;border:1px solid #2f2f2f;box-sizing:border-box;border-radius:3.5px;box-shadow:0 1px 5px rgba(0,0,0,0.4);"></div>
<span style="left:1479.60px;top:154px;font-size:10px;color:#a9a9ad;letter-spacing:-0.350px;transform-origin:0 0;transform:scaleX(0.9642);text-rendering:geometricPrecision;">ІНФОРМАЦІЯ</span>
<div style="left:1479.6px;top:171px;width:303.7px;height:1px;background:#333333;"></div>
<span style="left:1479.60px;top:188px;font-size:10.2px;color:#ffffff;letter-spacing:-0.061px;-webkit-text-stroke:0.33px #ffffff;text-rendering:geometricPrecision;">Створено</span>
<span style="left:1706.30px;top:188px;font-size:10.2px;color:#a9a9ad;letter-spacing:-0.081px;text-rendering:geometricPrecision;">минулого місяця</span>
<span style="left:1479.60px;top:208px;font-size:10.2px;color:#ffffff;letter-spacing:0.000px;transform-origin:0 0;transform:scaleX(1.0461);-webkit-text-stroke:0.33px #ffffff;text-rendering:geometricPrecision;">Ким</span>
<span style="left:1735.80px;top:208px;font-size:10.2px;color:#a9a9ad;letter-spacing:-0.234px;text-rendering:geometricPrecision;">resfast1 dv</span>
<span style="left:1479.60px;top:235px;font-size:10.2px;color:#ffffff;letter-spacing:-0.033px;-webkit-text-stroke:0.33px #ffffff;text-rendering:geometricPrecision;">Останнє оновлення</span>
<span style="left:1712.60px;top:235px;font-size:10.2px;color:#a9a9ad;letter-spacing:-0.169px;text-rendering:geometricPrecision;">27 хвилин тому</span>
<span style="left:1479.60px;top:255px;font-size:10.2px;color:#ffffff;letter-spacing:0.000px;transform-origin:0 0;transform:scaleX(1.0461);-webkit-text-stroke:0.33px #ffffff;text-rendering:geometricPrecision;">Ким</span>
<span style="left:1735.80px;top:255px;font-size:10.2px;color:#a9a9ad;letter-spacing:-0.234px;text-rendering:geometricPrecision;">resfast1 dv</span>
<div style="left:1465px;top:286px;width:332px;height:27px;background:#4a3636;border:1px solid #6f3638;box-sizing:border-box;border-radius:4px;"></div>
<svg style="left:1480px;top:294px;" width="10" height="12" viewBox="0 0 10 12"><path d="M0.8 1.7h8.4v1.4H0.8z M3.3 0.5h3.4v1.2H3.3z M1.4 3.8h7.2l-0.7 7.5H2.1z" fill="#f4eeee"/></svg>
<span style="left:1496.60px;top:296px;font-size:10.2px;color:#ffffff;letter-spacing:-0.063px;-webkit-text-stroke:0.33px #ffffff;text-rendering:geometricPrecision;">Видалити цей запис</span>
<svg style="left:1846.5px;top:12px;" width="14" height="12" viewBox="0 0 14 12"><path d="M6.9 1.2 L12.8 10 Q13.1 10.9 12.2 10.9 L1.6 10.9 Q0.7 10.9 1 10 Z" fill="#a2a2a2"/></svg>
<div style="left:1848px;top:32.5px;width:11px;height:1613.5px;background:#a2a2a2;border-radius:5.5px;"></div>
<svg style="left:1846.5px;top:1655px;" width="14" height="12" viewBox="0 0 14 12"><path d="M6.9 10.8 L12.8 2 Q13.1 1.1 12.2 1.1 L1.6 1.1 Q0.7 1.1 1 2 Z" fill="#a2a2a2"/></svg>
</body></html>
